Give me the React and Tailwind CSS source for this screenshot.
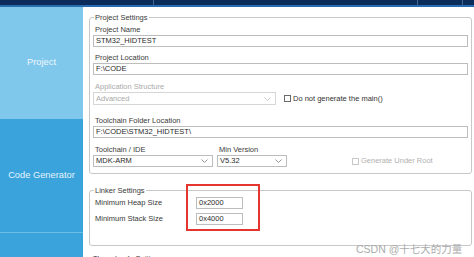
import React from 'react';

// chevron of a combo box
const Chevron = ({ color = '#8a8a8a' }) => (
  <svg width="7" height="4" viewBox="0 0 7 4" className="shrink-0">
    <path d="M0.5 0.5L3.5 3.5L6.5 0.5" stroke={color} strokeWidth="0.9" fill="none" />
  </svg>
);

const Label = ({ children, className = '' }) => (
  <div className={`h-[10px] whitespace-nowrap pl-[2px] leading-[10px] ${className}`}>{children}</div>
);

const Field = ({ value, className = '' }) => (
  <div
    className={`flex h-[12px] items-center border border-[#bdbdbd] bg-white px-[2px] leading-none text-[#2a2a2a] ${className}`}
  >
    {value}
  </div>
);

const Select = ({ value, disabled, className = '' }) => (
  <div
    className={`flex items-center justify-between border bg-white pl-[2px] pr-[4px] leading-none ${
      disabled ? 'border-[#d6d6d6] text-[#a9a9a9]' : 'border-[#bdbdbd] text-[#2a2a2a]'
    } ${className}`}
  >
    <span>{value}</span>
    <Chevron color={disabled ? '#c4c4c4' : '#8a8a8a'} />
  </div>
);

const Check = ({ label, disabled }) => (
  <div className={`flex items-center gap-[2px] whitespace-nowrap ${disabled ? 'text-[#b0b0b0]' : 'text-[#333]'}`}>
    <span className={`h-[7px] w-[7px] border bg-white ${disabled ? 'border-[#c8c8c8]' : 'border-[#6a6a6a]'}`} />
    <span className="leading-none">{label}</span>
  </div>
);

export default function App() {
  return (
    <div className="relative h-[257px] w-[474px] overflow-hidden bg-white font-['Liberation_Sans',Arial,sans-serif] text-[7.5px] text-[#3a3a3a]">
      {/* title bar */}
      <div className="flex h-[5px] bg-[#0b2b5a]">
        <div className="w-[153px]" />
        <div className="w-px bg-[#3f6690]" />
        <div className="w-[263px]" />
        <div className="w-px bg-[#3f6690]" />
        <div className="w-[44px]" />
        <div className="w-px bg-[#3f6690]" />
      </div>
      <div className="h-[2px] bg-[#2a6cb0]" />

      <div className="flex h-[250px]">
        {/* sidebar */}
        <div className="flex w-[83px] shrink-0 flex-col text-[9.3px]">
          <div className="flex h-[112px] items-center justify-center bg-[#80c7ec] text-[#eef7fc]">Project</div>
          <div className="flex h-[113px] items-center justify-center bg-[#3aa3dc] text-[#e4f3fb]">Code Generator</div>
          <div className="h-px bg-[#6dbde7]" />
          <div className="flex-1 bg-[#3aa3dc]" />
        </div>

        {/* content */}
        <div className="flex-1 pl-[6px] pr-[2px]">
          <fieldset className="mt-[6px] rounded-[3px] border border-[#c8c8c8] px-[3px] pb-[6px]">
            <legend className="ml-[1px] px-[1px] leading-[9px]">Project Settings</legend>
            <Label className="mt-[3px]">Project Name</Label>
            <Field value="STM32_HIDTEST" />
            <Label className="mt-[6px]">Project Location</Label>
            <Field value="F:\CODE" />
            <Label className="mt-[7px] text-[#aaaaaa]">Application Structure</Label>
            <div className="flex items-center">
              <Select value="Advanced" disabled className="h-[13px] w-[183px]" />
              <div className="ml-[8px]">
                <Check label="Do not generate the main()" />
              </div>
            </div>
            <Label className="mt-[11px]">Toolchain Folder Location</Label>
            <Field value="F:\CODE\STM32_HIDTEST\" />
            <div className="mt-[7px] flex items-end">
              <div className="w-[120px]">
                <Label>Toolchain / IDE</Label>
                <Select value="MDK-ARM" className="h-[12px]" />
              </div>
              <div className="ml-[4px] w-[70px]">
                <Label className="pl-[1px]">Min Version</Label>
                <Select value="V5.32" className="h-[12px]" />
              </div>
              <div className="ml-[65px] flex h-[12px] items-center">
                <Check label="Generate Under Root" disabled />
              </div>
            </div>
          </fieldset>

          <fieldset className="mt-[12px] rounded-[3px] border border-[#c8c8c8] px-[3px] pb-[20px]">
            <legend className="ml-[1px] px-[1px] leading-[9px]">Linker Settings</legend>
            <div className="mt-[2px] flex items-center">
              <div className="w-[103px] pl-[2px] leading-none">Minimum Heap Size</div>
              <Field value="0x2000" className="h-[11px] w-[47px]" />
            </div>
            <div className="mt-[4px] flex items-center">
              <div className="w-[103px] pl-[2px] leading-none">Minimum Stack Size</div>
              <Field value="0x4000" className="h-[11px] w-[47px]" />
            </div>
          </fieldset>

          <div className="mt-[8px] pl-[4px] leading-[9px]">Thread-safe Settings</div>
        </div>
      </div>

      {/* red annotation */}
      <div className="absolute left-[186px] top-[184px] h-[47px] w-[74px] border-2 border-[#e5352f]" />

      {/* watermark */}
      <div className="absolute left-[356px] top-[243px] whitespace-nowrap text-[10.5px] leading-[13px] text-[#ababab] font-['Liberation_Sans','Noto_Sans_CJK_SC',sans-serif]">
        CSDN @十七大的力量
      </div>
    </div>
  );
}
